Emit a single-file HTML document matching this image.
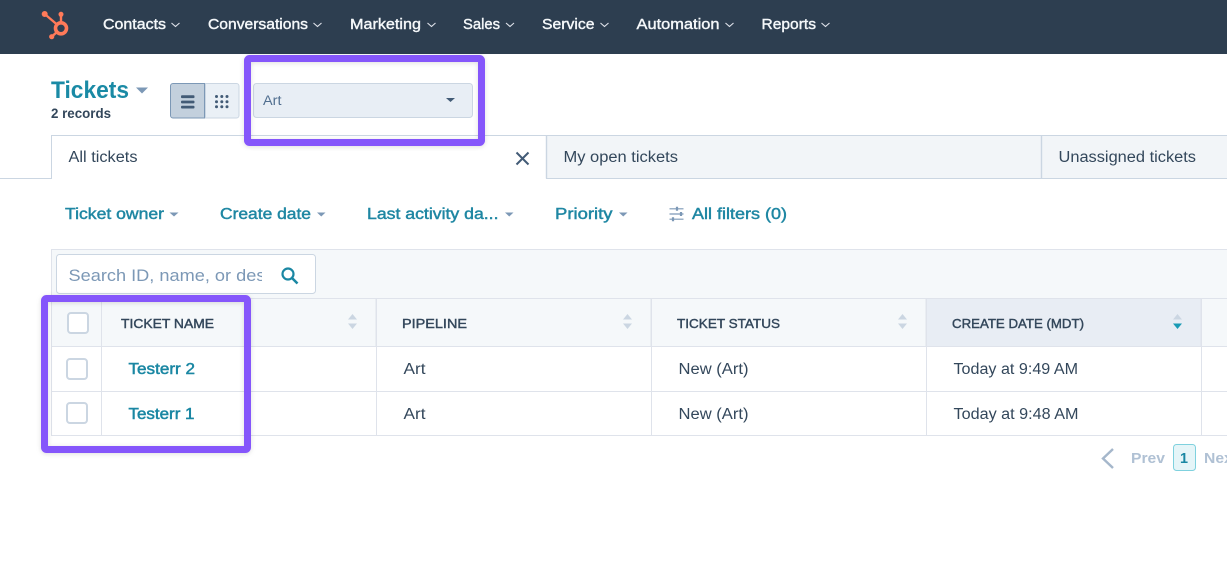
<!DOCTYPE html>
<html lang="en"><head><meta charset="utf-8"><title>Tickets</title>
<style>
html,body{margin:0;padding:0;width:1227px;height:564px;overflow:hidden;background:#fff}
svg{display:block}
text{font-family:"Liberation Sans",sans-serif;white-space:pre}
.n{font-size:15px;fill:#f5f8fa;stroke:#f5f8fa;stroke-width:.4px}
.f{font-size:15.500px;fill:#1f87a3;stroke:#1f87a3;stroke-width:.45px}
.h{font-size:12.500px;fill:#33475b;stroke:#33475b;stroke-width:.4px}
.c{font-size:15.500px;fill:#33475b}
.l{font-size:15.500px;fill:#1a87a3;stroke:#1a87a3;stroke-width:.5px}
</style></head><body>
<svg width="1227" height="564" viewBox="0 0 1227 564" xmlns="http://www.w3.org/2000/svg">
<defs><clipPath id="sc"><rect x="60" y="260" width="202" height="30"/></clipPath><clipPath id="nx"><rect x="1200" y="440" width="27" height="40"/></clipPath>
<filter id="sh" x="-10%" y="-10%" width="120%" height="120%"><feDropShadow dx="0" dy="1" stdDeviation="2.5" flood-color="#000" flood-opacity=".13"/></filter></defs>
<rect width="1227" height="54" fill="#2d3e50"/>
<g fill="none" stroke="#ff7a59"><circle cx="61" cy="28.300" r="5.500" stroke-width="3.600"/><path d="M44.700 14L57 24.500" stroke-width="2.300"/><path d="M61 14.300V22" stroke-width="2.400"/><path d="M51.700 36.700L57 32" stroke-width="2.400"/></g>
<g fill="#ff7a59"><circle cx="44.700" cy="14" r="3"/><circle cx="61" cy="14.300" r="2.500"/><circle cx="51.700" cy="36.700" r="2.600"/></g>
<text class="n" x="103" y="29" textLength="63" lengthAdjust="spacingAndGlyphs">Contacts</text>
<text class="n" x="208" y="29" textLength="100" lengthAdjust="spacingAndGlyphs">Conversations</text>
<text class="n" x="350" y="29" textLength="71" lengthAdjust="spacingAndGlyphs">Marketing</text>
<text class="n" x="463" y="29" textLength="37" lengthAdjust="spacingAndGlyphs">Sales</text>
<text class="n" x="542" y="29" textLength="52.500" lengthAdjust="spacingAndGlyphs">Service</text>
<text class="n" x="636.500" y="29" textLength="83" lengthAdjust="spacingAndGlyphs">Automation</text>
<text class="n" x="761.500" y="29" textLength="54.500" lengthAdjust="spacingAndGlyphs">Reports</text>
<g fill="none" stroke="#dfe3eb" stroke-width="1.100"><path d="M171.500 23l4 3.500 4-3.500M313.500 23l4 3.500 4-3.500M427.500 23l4 3.500 4-3.500M506 23l4 3.500 4-3.500M600.500 23l4 3.500 4-3.500M725.500 23l4 3.500 4-3.500M821.500 23l4 3.500 4-3.500"/></g>

<text x="51" y="98" font-size="24" font-weight="700" fill="#1a8aa5" textLength="78" lengthAdjust="spacingAndGlyphs">Tickets</text>
<path d="M136 87.500h12l-6 6z" fill="#7c98b6"/>
<text x="51" y="118" font-size="13.500" font-weight="700" fill="#33475b" textLength="60" lengthAdjust="spacingAndGlyphs">2 records</text>
<path d="M205.500 83.500h31a2.500 2.500 0 0 1 2.500 2.500v29.500a2.500 2.500 0 0 1-2.500 2.500h-31z" fill="#eaf0f6" stroke="#cbd6e2"/>
<path d="M204.500 83.500h-31.500a2.500 2.500 0 0 0-2.500 2.500v29.500a2.500 2.500 0 0 0 2.500 2.500h31.500z" fill="#c3d0dd" stroke="#7c98b6"/>
<g fill="#425b76"><rect x="181" y="95.300" width="13.500" height="2.800" rx="1"/><rect x="181" y="100.600" width="13.500" height="2.800" rx="1"/><rect x="181" y="105.700" width="13.500" height="2.800" rx="1"/></g>
<g fill="#425b76"><circle cx="216.500" cy="96.500" r="1.500"/><circle cx="221.800" cy="96.500" r="1.500"/><circle cx="227" cy="96.500" r="1.500"/><circle cx="216.500" cy="101.700" r="1.500"/><circle cx="221.800" cy="101.700" r="1.500"/><circle cx="227" cy="101.700" r="1.500"/><circle cx="216.500" cy="106.800" r="1.500"/><circle cx="221.800" cy="106.800" r="1.500"/><circle cx="227" cy="106.800" r="1.500"/></g>
<rect x="253.500" y="83.500" width="219" height="34" rx="3" fill="#e8eef5" stroke="#cbd6e2"/>
<text x="263" y="105" font-size="13.500" fill="#516f90" textLength="18.500" lengthAdjust="spacingAndGlyphs">Art</text>
<path d="M446 98h9l-4.500 4z" fill="#425b76"/>

<path d="M0 178.500H51.500V135.500H1227M546.500 135.500V178.500H1227" fill="none" stroke="#cbd6e2"/>
<rect x="547" y="136" width="494" height="42" fill="#f2f5f8"/><rect x="1042" y="136" width="185" height="42" fill="#f2f5f8"/>
<path d="M546.500 135.500V178.500M1041.500 135.500V178.500" stroke="#cbd6e2" stroke-width="1.400"/>
<text x="68.500" y="162" font-size="15.500" fill="#33475b" textLength="69" lengthAdjust="spacingAndGlyphs">All tickets</text>
<path d="M516.500 152.500l12 12M528.500 152.500l-12 12" stroke="#425b76" stroke-width="2" fill="none"/>
<text x="563.500" y="162" font-size="15.500" fill="#33475b" textLength="114.500" lengthAdjust="spacingAndGlyphs">My open tickets</text>
<text x="1058.500" y="162" font-size="15.500" fill="#33475b" textLength="137.500" lengthAdjust="spacingAndGlyphs">Unassigned tickets</text>

<text class="f" x="65" y="219" textLength="99" lengthAdjust="spacingAndGlyphs">Ticket owner</text>
<text class="f" x="220" y="219" textLength="91" lengthAdjust="spacingAndGlyphs">Create date</text>
<text class="f" x="367" y="219" textLength="131.500" lengthAdjust="spacingAndGlyphs">Last activity da...</text>
<text class="f" x="555" y="219" textLength="57.500" lengthAdjust="spacingAndGlyphs">Priority</text>
<text class="f" x="692" y="219" textLength="95" lengthAdjust="spacingAndGlyphs">All filters (0)</text>
<path d="M169.500 212.500h9l-4.500 4zM317 212.500h8.500l-4.250 4zM505 212.500h8.500l-4.250 4zM619 212.500h8.500l-4.250 4z" fill="#7c98b6"/>
<path d="M669.500 208.800h14M669.500 214h14M669.500 219.200h14" stroke="#7c98b6" stroke-width="1.200"/>
<path d="M677 206.800v4M681 212v4M673 217.200v4" stroke="#7c98b6" stroke-width="2.200"/>

<rect x="51.500" y="249.500" width="1176" height="49" fill="#f5f8fa" stroke="#dfe3eb"/>
<rect x="56.500" y="254.500" width="259" height="39" rx="3" fill="#fff" stroke="#cbd6e2"/>
<text x="68.500" y="281" font-size="17" fill="#7c98b6" clip-path="url(#sc)" textLength="206" lengthAdjust="spacingAndGlyphs">Search ID, name, or desc</text>
<circle cx="288" cy="274" r="5.500" fill="none" stroke="#1a87a3" stroke-width="2.200"/><path d="M292 278l5.500 5.500" stroke="#1a87a3" stroke-width="2.600"/>

<rect x="51" y="299" width="1176" height="47" fill="#f5f8fa"/>
<rect x="926" y="299" width="275" height="47" fill="#e8edf4"/>
<path d="M51 298.500H1227M51 346.500H1227M51 391.500H1227M51 435.500H1227M51.500 298V436M101.500 298V436M376.500 298V436M651.500 298V436M926.500 298V436M1201.500 298V436" fill="none" stroke="#dfe3eb"/>
<path d="M376 299v47M651 299v47M926 299v47M1201 299v47" stroke="#dfe3eb"/>
<text class="h" x="121" y="328" textLength="93" lengthAdjust="spacingAndGlyphs">TICKET NAME</text>
<text class="h" x="402" y="328" textLength="65" lengthAdjust="spacingAndGlyphs">PIPELINE</text>
<text class="h" x="677" y="328" textLength="103" lengthAdjust="spacingAndGlyphs">TICKET STATUS</text>
<text class="h" x="952" y="328" textLength="132" lengthAdjust="spacingAndGlyphs">CREATE DATE (MDT)</text>
<g fill="#cbd6e2"><path d="M352.500 314l4.500 5.500h-9zM348 323.500h9l-4.500 5.500zM627.500 314l4.500 5.500h-9zM623 323.500h9l-4.500 5.500zM902.500 314l4.500 5.500h-9zM898 323.500h9l-4.500 5.500zM1177.500 314l4.500 5.500h-9z"/></g>
<path d="M1173 323.500h9l-4.500 5.500z" fill="#1a9bb5"/>
<g fill="#fff" stroke="#cbd6e2" stroke-width="2"><rect x="68" y="313" width="20" height="20" rx="3"/><rect x="67" y="359" width="20" height="20" rx="3"/><rect x="67" y="403" width="20" height="20" rx="3"/></g>
<text class="l" x="128.500" y="374" textLength="66.500" lengthAdjust="spacingAndGlyphs">Testerr 2</text>
<text class="l" x="128.500" y="419" textLength="66" lengthAdjust="spacingAndGlyphs">Testerr 1</text>
<text class="c" x="403.500" y="374" textLength="22" lengthAdjust="spacingAndGlyphs">Art</text>
<text class="c" x="403.500" y="419" textLength="22" lengthAdjust="spacingAndGlyphs">Art</text>
<text class="c" x="678.500" y="374" textLength="70" lengthAdjust="spacingAndGlyphs">New (Art)</text>
<text class="c" x="678.500" y="419" textLength="70" lengthAdjust="spacingAndGlyphs">New (Art)</text>
<text class="c" x="953.500" y="374" textLength="124.500" lengthAdjust="spacingAndGlyphs">Today at 9:49 AM</text>
<text class="c" x="953.500" y="419" textLength="125" lengthAdjust="spacingAndGlyphs">Today at 9:48 AM</text>

<path d="M1113 449l-10 9.500 10 9.500" fill="none" stroke="#a5b7cb" stroke-width="2.400"/>
<text x="1131" y="463" font-size="15" font-weight="700" fill="#b0c1d4" textLength="34" lengthAdjust="spacingAndGlyphs">Prev</text>
<rect x="1173.500" y="444.500" width="22" height="26" rx="3" fill="#e5f5f8" stroke="#7fd1de"/>
<text x="1180" y="463" font-size="15" font-weight="700" fill="#1a87a3" textLength="8" lengthAdjust="spacingAndGlyphs">1</text>
<text x="1204" y="463" font-size="15" font-weight="700" fill="#b0c1d4" clip-path="url(#nx)" textLength="34" lengthAdjust="spacingAndGlyphs">Next</text>

<rect x="247.500" y="58.500" width="234" height="84" rx="2" fill="none" stroke="#8557fb" stroke-width="7" filter="url(#sh)"/>
<rect x="44.500" y="298.500" width="203" height="151" rx="2" fill="none" stroke="#8557fb" stroke-width="7" filter="url(#sh)"/>
</svg>
</body></html>
